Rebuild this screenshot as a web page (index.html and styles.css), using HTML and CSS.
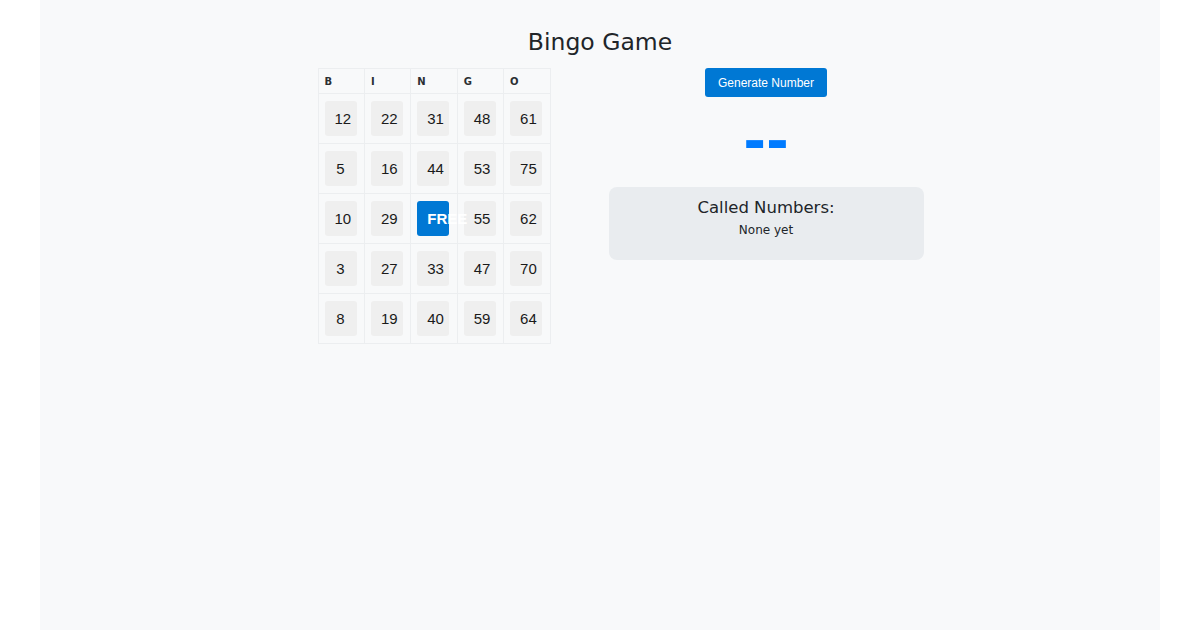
FILE: index.html
```html
<!DOCTYPE html>
<html>
<head>
<meta charset="utf-8">
<title>Bingo Game</title>
<link rel="stylesheet" href="styles.css">
</head>
<body>
<div class="page">
  <h1 class="title">Bingo Game</h1>
  <div class="row">
    <table class="card">
      <thead>
        <tr><th>B</th><th>I</th><th>N</th><th>G</th><th>O</th></tr>
      </thead>
      <tbody>
        <tr><td><button class="cell">12</button></td><td><button class="cell">22</button></td><td><button class="cell">31</button></td><td><button class="cell">48</button></td><td><button class="cell">61</button></td></tr>
        <tr><td><button class="cell">5</button></td><td><button class="cell">16</button></td><td><button class="cell">44</button></td><td><button class="cell">53</button></td><td><button class="cell">75</button></td></tr>
        <tr><td><button class="cell">10</button></td><td><button class="cell">29</button></td><td><button class="cell free">FREE</button></td><td><button class="cell">55</button></td><td><button class="cell">62</button></td></tr>
        <tr><td><button class="cell">3</button></td><td><button class="cell">27</button></td><td><button class="cell">33</button></td><td><button class="cell">47</button></td><td><button class="cell">70</button></td></tr>
        <tr><td><button class="cell">8</button></td><td><button class="cell">19</button></td><td><button class="cell">40</button></td><td><button class="cell">59</button></td><td><button class="cell">64</button></td></tr>
      </tbody>
    </table>
    <div class="side">
      <button class="generate">Generate Number</button>
      <div class="current">--</div>
      <div class="called">
        <h3 class="called-title">Called Numbers:</h3>
        <p class="called-list">None yet</p>
      </div>
    </div>
  </div>
</div>
</body>
</html>
```

FILE: styles.css
```css
html, body {
  margin: 0;
  padding: 0;
  background: #ffffff;
}

body {
  font-family: "DejaVu Sans", sans-serif;
  color: #212529;
}

.page {
  width: 1120px;
  min-height: 630px;
  margin: 0 auto;
  background: #f8f9fa;
  padding-top: 27px;
  box-sizing: border-box;
}

.title {
  margin: 0 0 11px;
  font-size: 23.5px;
  font-weight: normal;
  text-align: center;
  line-height: 30px;
  color: #212529;
}

.row {
  display: flex;
  justify-content: center;
  align-items: flex-start;
  gap: 58px;
  padding-left: 41px;
}

.card {
  border-collapse: collapse;
  table-layout: fixed;
  width: 233px;
}

.card th,
.card td {
  border: 1px solid #eceef0;
}

.card th {
  height: 24px;
  padding: 0 6px;
  text-align: left;
  font-size: 10px;
  font-weight: bold;
  color: #2b2f33;
}

.card td {
  padding: 6px 0 7px 6px;
  height: 36px;
}

.cell {
  display: block;
  width: 32px;
  height: 35px;
  padding: 0 10px;
  border: none;
  border-radius: 3px;
  background: #efefef;
  font-family: "Liberation Sans", Arial, sans-serif;
  font-size: 15px;
  color: #1a1a1a;
  text-align: center;
  white-space: nowrap;
}

.cell.free {
  background: #0078d4;
  color: #ffffff;
  font-weight: bold;
  text-align: left;
}

.side {
  width: 315px;
  display: flex;
  flex-direction: column;
  align-items: center;
}

.generate {
  height: 29px;
  padding: 0 13px;
  border: none;
  border-radius: 3px;
  background: #0078d4;
  color: #ffffff;
  font-family: "Liberation Sans", Arial, sans-serif;
  font-size: 12px;
}

.current {
  margin-top: 12px;
  font-size: 55px;
  font-weight: bold;
  line-height: 64px;
  color: #007bff;
}

.called {
  align-self: stretch;
  margin-top: 14px;
  padding: 9px 10px 10px;
  background: #e9ecef;
  border-radius: 8px;
  text-align: center;
  min-height: 54px;
}

.called-title {
  margin: 0;
  font-size: 16.5px;
  font-weight: normal;
  line-height: 24px;
  color: #212529;
}

.called-list {
  margin: 2px 0 0;
  font-size: 12px;
  line-height: 16px;
  color: #212529;
}
```
